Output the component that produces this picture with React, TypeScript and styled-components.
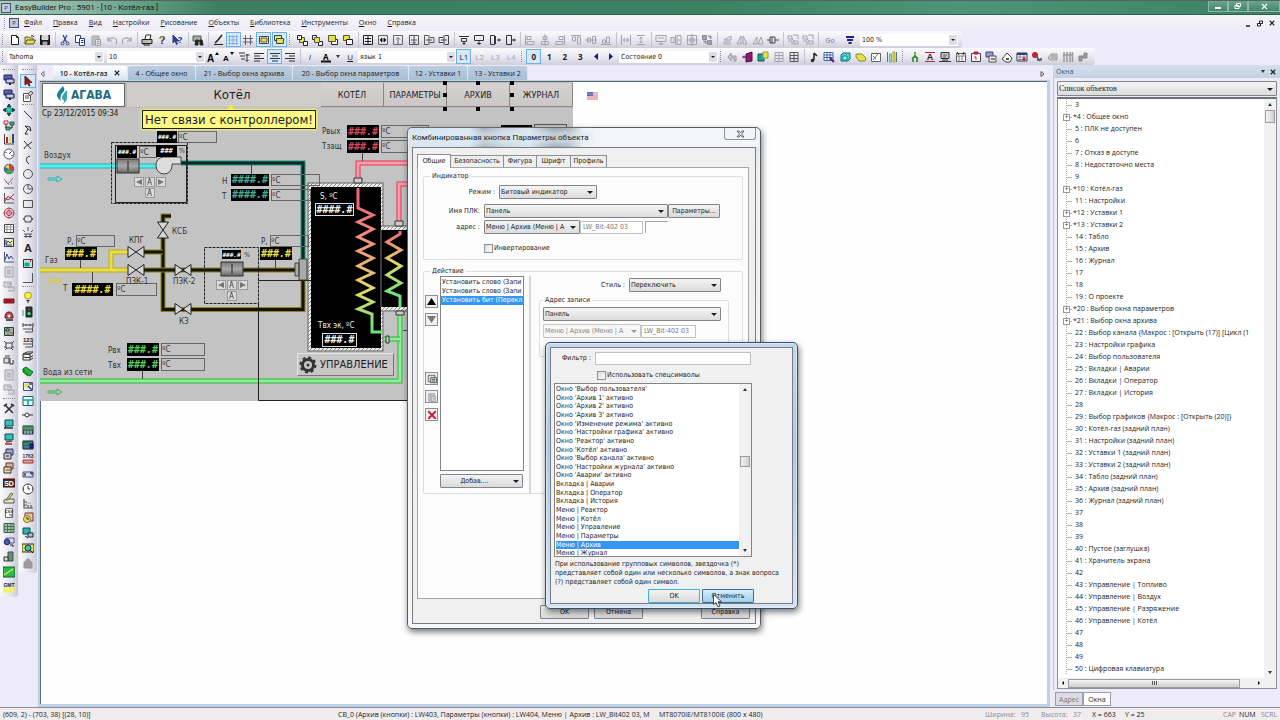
import React, { ReactNode } from 'react';
import styled, { createGlobalStyle, css } from 'styled-components';

const ui = '"Open Sans", "Noto Sans", sans-serif';
const tahoma = '"DejaVu Sans Condensed", "DejaVu Sans", sans-serif';
const caption = 'Roboto, "Open Sans", sans-serif';

const Global = createGlobalStyle`
  *, *::before, *::after { box-sizing: border-box; }
  body { margin: 0; background: #edebf7; font-family: ${ui}; font-size: 7px; color: #1c1c24; }
  button, input, select { font: inherit; color: inherit; margin: 0; padding: 0; border-radius: 0; }
  ul { list-style: none; margin: 0; padding: 0; }
  svg { display: block; }
`;

/* ---------- icons, all on a 12 x 12 grid ---------- */
const K = '#222', G = '#a3a3ab', B = '#2b3f8f', Y = '#e8e23a', T = '#19a39b', R = '#c0203a';
const p = (d: string, s = K, f = 'none', w = 1) => <path d={d} stroke={s} fill={f} strokeWidth={w} />;
const frame = (s = K, f = '#fff') => p('M1.5 2.5h9v8h-9z', s, f);
const letters = (t: string, c = K, size = 6, y = 8) => (
  <text x="6" y={y} textAnchor="middle" fontSize={size} fontWeight="700" fontFamily="Liberation Sans" fill={c}>{t}</text>
);

const icons: Record<string, ReactNode> = {
  file: p('M2.5 1.5h5l2 2v7h-7zM7.5 1.5v2h2', K, '#fff'),
  open: <>{p('M1 10V3h4l1 1h3v2', '#6a6a20', '#d9d36a')}{p('M1 10l2-4h8.500l-2 4z', '#55551a', '#e7e05a')}{p('M7 2q2-1 3 1', K)}</>,
  save: <>{p('M1.500 1.500h9v9h-9z', '#111', '#222')}{p('M3 1.500h6v4H3z', '#ddd', '#cfd8d0')}{p('M4 8h4v2.500H4z', '#999', '#aaa')}</>,
  cut: <>{p('M4 1l3.500 7M8 1L4.500 8', B, 'none', 1.2)}<circle cx="3.500" cy="9.500" r="1.500" fill="none" stroke={B} /><circle cx="8.500" cy="9.500" r="1.500" fill="none" stroke={B} /></>,
  copy: <>{p('M1.500 1.500h5v7h-5z', B, '#fff')}{p('M5.500 4.500h5v7h-5zM7 6.500h2.500M7 8.500h2.500', B, '#fff')}</>,
  clone: <>{p('M1.500 1.500h8v8h-8z', '#555', '#ddd')}{p('M4.500 4.500h7v6h-7zM6 6.500h4M6 8.500h4', '#444', '#d8e8d8')}</>,
  paste: <>{p('M2 2h7v9H2z', G, '#bdbdc4')}{p('M5.500 5.500h5v6h-5zM7 7.500h2.500M7 9.500h2.500', G, '#ddd')}</>,
  undo: p('M2 3v4h4M2 7q2-4 6-3t2 6', G, 'none', 1.2),
  redo: p('M10 3v4H6M10 7Q8 3 4 4t-2 6', G, 'none', 1.2),
  print: <>{p('M4 5l1-4h5l-1 4', K, '#fff')}{p('M1 5.500h10v4H1zM2.500 9.500l.500 1.500h6', K, '#b9b9b9')}{p('M7 7.500h2', Y)}</>,
  help: <>{letters('?', '#333', 11, 10)}<path d="M4.500 3.500Q6 2 7.500 3.500" stroke="#d8d020" fill="none" /></>,
  whats: <>{p('M1 1l0 8 2-2 1.500 3.500 1-.500L4 7h3z', B, B)}<text x="6" y="9" fontSize="9" fontWeight="700" fill={B}>?</text></>,
  find: <>{p('M1 2h8v5H1z', '#556', '#9bb59b')}{p('M4 6h2v5H3zM8 6h2l1 5H8zM6 7h2', K, '#222')}</>,
  brush: <>{p('M2 10.500h9', K)}{p('M3 9l3-3M6 6l4-5', K, 'none', 1.600)}</>,
  grid: p('M1 2.500h10M1 6h10M1 9.500h10M2.500 1v10M6 1v10M9.500 1v10', '#7f9fd0', 'none', 0.800),
  snap: p('M3.500 1v10M8.500 1v10M1 4.500h10M1 8h10', '#333', 'none', 0.700),
  box: <>{p('M1.500 2.500h9v7h-9z', '#444', '#fff')}{p('M3 4h6v4H3z', '#555', Y)}</>,
  boxes: <>{p('M1.500 1.500h7v5h-7z', '#444', '#d8e890')}{p('M3.500 4.500h7v5h-7z', '#444', Y)}</>,
  front: <>{p('M1.500 1.500h4v4h-4zM7.500 7.500h4v4h-4z', K, '#fff')}{p('M3.500 3.500h5v5h-5z', '#555', Y)}</>,
  back: <>{p('M3.500 3.500h5v5h-5z', '#555', Y)}{p('M1.500 1.500h4v4h-4zM7.500 7.500h4v4h-4z', K, '#fff')}</>,
  fwd: <>{p('M4.500 5.500h6v5h-6z', K, '#fff')}{p('M1.500 1.500h7v6h-7z', '#555', Y)}</>,
  bwd: <>{p('M1.500 1.500h6v5h-6z', '#555', Y)}{p('M4.500 5.500h6v5h-6z', K, '#fff')}</>,
  cw: <>{p('M1.500 1.500h9v9h-9zM6 2v8M3 4.500h6M3 7.500h6', K)}</>,
  ch: <>{p('M1.500 1.500h9v9h-9z', '#666')}{p('M3 6l2-2v4zM9 6L7 4v4z', K, K)}</>,
  ct: p('M1.500 1.500h9v9h-9zM6 4v6M4 5.500l2-2 2 2', '#666'),
  cp: p('M1.500 1.500h9v9h-9zM6 2v8M3 6h6M4.500 8L6 9.500 7.500 8', '#555'),
  ml: p('M5 1.500H1.500v9H5M6 1v10M7 3.500h4v5H7M3 6h6', '#555'),
  mr: p('M7 1.500h3.500v9H7M6 1v10M5 3.500H1v5h4M3 6h6', '#444'),
  sw: p('M1 2.500h10M3.500 4.500h5v3h-5zM6 7v4M4.500 9.500h3', '#333'),
  sh: p('M1.500 1.500h9v5h-9zM6 6.500V11M4 9.500h4', '#333'),
  s3: p('M1.500 1.500h4v9h-4zM6.500 2v8M8 6h4M10 4.500v3', '#333'),
  s4: p('M2.500 1.500h5v9h-5zM8 6h4M10 4.500v3', '#333'),
  al: p('M1.500 1v10M3 2.500h4v3H3zM3 7.500h7v3H3z', G),
  ac: p('M6 0v12M4 2.500h4v3H4zM2.500 7.500h7v3h-7z', G),
  ar: p('M10.500 1v10M5 2.500h4v3H5zM2 7.500h7v3H2z', G),
  at: p('M1 1.500h10M2.500 3h3v4h-3zM7.500 3h3v7h-3z', G),
  am: p('M0 6h12M2.500 4h3v4h-3zM7.500 2.500h3v7h-3z', G),
  ab: p('M1 10.500h10M2.500 9V6h3v3zM6.500 9V3h3v6z', G),
  dh: p('M1.500 1v10M10.500 1v10M3 6h6M3 6l2-2M3 6l2 2M9 6L7 4M9 6L7 8', G),
  dv: p('M2 1.500h8M2 10.500h8M6 3v6M4.500 4.500L6 3l1.500 1.500M4.500 7.500L6 9l1.500-1.500', G),
  z1: p('M1 1.500h10v6H1zM3 4h6M6 7v4M3.500 10h5', G),
  z2: p('M1 3.500h3v5H1zM5.500 1v10M7 1.500h4v9H7zM8 6h2', G),
  z3: p('M1.500 1.500h9v9h-9zM4 4h4v4H4zM6 0v12M0 6h12', G),
  z4: p('M1.500 1.500h4v4h-4zM6.500 6.500h4v4h-4zM7 2h3v3M2 7h3v3', '#8d8d95', '#a3a3ab'),
  f1: p('M10 2L3 6h7zM10 8H3v2h7', G),
  f2: p('M5 2v8H1zM7 2v8h4z', G),
  f3: p('M5 3v7H1zM6 10l3-7 2 7z', G),
  f4: p('M0 6h3M3 3v6h5V3zM8 6h4M5 3v6', '#444'),
  g1: p('M1 2h4v3H1zM7 7h4v3H7zM6 1h5v4M1 7h4v4M5 5l2 2', G),
  go: letters('Go', '#99a', 7, 9),
  stack: p('M2 3h8M3 6h6M4.500 9h3', '#1b1f86', 'none', 2),
  alignL: p('M1 2.500h10M1 5h6M1 7.500h10M1 10h6', '#333'),
  alignC: p('M1 2.500h10M3 5h6M1 7.500h10M3 10h6', '#333'),
  alignR: p('M1 2.500h10M5 5h6M1 7.500h10M5 10h6', '#333'),
  space: p('M1 2h6M2 5h5M3 8h4M9 3v7M7.500 9L9 10.500 10.500 9M7.500 4h4', '#333'),
  grow: <><text x="0" y="11" fontSize="10" fontWeight="700" fontFamily="Liberation Sans">A</text><path d="M8 4l2-3 2 3z" /></>,
  shrink: <><text x="1" y="10" fontSize="8" fontWeight="700" fontFamily="Liberation Sans">A</text><path d="M8 1l2 3 2-3z" /></>,
  flash: p('M1 6l3-4v3h5v5H7V7H4v3z', '#9a9aa4', '#c4c4cc'),
  shape: <>{p('M0 6h4M2 4.500v3', '#44208a')}{p('M4 3l6-2v9l-6 1z', '#501040', '#8a1e6a')}</>,
  picture: <>{p('M1 3h6v7H1z', '#155', T)}{p('M6 1h5v6H6z', '#995', Y)}</>,
  shelf: p('M2 1.500h8v9H2zM2 4.500h8M2 7.500h8M5 3h2M5 6h2M5 9h2', '#555'),
  shelfG: p('M2 1.500h8v9H2zM2 4.500h8M2 7.500h8M5 3h2M5 6h2M5 9h2', G),
  note: <>{p('M6 2v7M6 2l3 3', K, 'none', 1.500)}<circle cx="4.500" cy="9.500" r="1.700" fill="#222" /></>,
  tableB: <>{p('M1 1.500h9v8H1zM1 4h9M1 6.500h9M4 1v8M7 1v8', '#46a', '#fff')}{p('M7 7l4 4', '#44208a', 'none', 2)}</>,
  cube: <>{p('M2 4l2-2h7v6l-2 2H2z', '#077', '#55d3d3')}{p('M4 5h4v4H4z', '#088', '#9ff')}</>,
  tag: p('M1 3h6l4 4-1 3H4L1 6z', '#885', Y),
  edit: <>{frame('#667')}{p('M3 9l5-6M3 5l3 3', '#494')}</>,
  bars: <>{p('M1.500 1v10M10.500 1v10', '#577')}{p('M3.500 3h2v8h-2z', '#7aa', '#9dc')}{p('M7 1h2v10H7z', '#aa4', Y)}</>,
  run: <>{p('M6 1v4L3 8M6 5l3 3M4 8v3M8 8v3', '#484', 'none', 1.800)}{p('M4 4l4-2', Y)}</>,
  textA: <>{p('M1 1.500h10M1 10.500h10', R)}{letters('A', K, 9, 9)}</>,
  screen: <>{p('M2 1.500h8v6H2zM0 10.500h12M3 9h6', '#333', '#ccc')}{p('M4 4h4M4 6h3', '#555')}</>,
  cal: <>{frame('#555')}{p('M1 5h10M4 5v5M7 5v5', '#777')}{p('M2 1l2 3M9 1L8 4', '#222')}</>,
  clip: <>{frame('#444')}{p('M4 1h4v2H4z', R, R)}{p('M4 6h2v3', R)}</>,
  win: <>{p('M1 1h7v5H1z', '#448', '#99c')}{p('M4 5h7v6H4z', '#555', '#eee')}{p('M6 8h4', K)}</>,
  house: <>{p('M1 8l5-6 5 5-2 4H5z', '#444', '#fff')}{p('M5 8h3', '#464', 'none', 2)}</>,
  sched: <>{p('M1 2h10v8H1z', '#335', '#fff')}{p('M1 3h10', B, 'none', 2)}{p('M2 6h8M2 8.500h8M4 4v6M8 4v6', '#888')}{p('M7 7h2v2H7z', R, R)}</>,
  hand: <><circle cx="4" cy="4" r="3" fill={R} />{p('M5 5l4 5M6 9h4V7', '#555', 'none', 1.500)}</>,
  gray1: p('M1 7l3-4h6v6H3zM4 5h5M4 7h5', '#999', '#ccc'),
  gray2: p('M2 1v10M5 1v10M8 1v10M10.500 1v10M1 4h10', '#999', 'none', 1.500),
  gray3: p('M2 5h5V2h3v5H5v3H2z', '#888', '#999'),
  arrow: p('M3 1v9l2.500-2 1.500 3 1-.500L6.500 7.500H10z', '#6a1616', '#8a1c1c'),
  props: <>{p('M1.500 3.500h7v8h-7zM3 6h4M3 8h4', '#555', '#fff')}{p('M6 4l3-3 2 2-3 3z', '#555', '#ccc')}</>,
  line: p('M2 2l8 8', '#333'),
  poly: p('M3 2l5 1 1 4-3-2zM6 5l-3 5h3', '#333'),
  bez: p('M2 2l7 8M10 3L3 8M2 10l1-2', '#333'),
  arc: p('M8 2Q3 3 5 8l2 2', '#333'),
  circle: <circle cx="6" cy="6" r="4.500" stroke="#555" fill="none" />,
  pie: <><circle cx="6" cy="6" r="4.500" stroke="#555" fill="none" />{p('M6 1.500V6h4.500', '#555')}</>,
  rect: p('M1.500 2.500h9v7h-9z', '#555'),
  roundp: p('M3 3h6v2l2 1-2 1v2H3V7L1 6l2-1z', '#444'),
  bracket: p('M6 0v4M1 3l2 2M11 3L9 5M2 7h8M2 9.500h8M4 7v4M8 7v4', '#555'),
  bigA: letters('A', K, 11, 10),
  image: <>{frame('#333', '#bfe8d8')}{p('M3 6h4v3H3z', T, T)}{p('M8 4h1', R, 'none', 2)}</>,
  corner: p('M10.500 1v9.500H1', '#555'),
  bulb: <><circle cx="6" cy="4.500" r="3.500" fill="#f4ee4a" stroke="#a49c20" />{p('M4.500 9.500h3M5 11h2', K)}</>,
  light: <>{p('M4 1h6v10H4z', '#133', '#1a3a2a')}<circle cx="7" cy="3.500" r="1.200" fill={R} /><circle cx="7" cy="7.500" r="1.600" fill="#3cf06a" />{p('M1 4v6', T)}</>,
  slide: <>{p('M1 2v4M11 2v4M1 4h10M4 3v2M8 3v2', '#444')}{p('M1 8h9.500M10.500 6v5H3', '#555')}</>,
  num: <>{letters('123', K, 6, 5.500)}{p('M1 8h9.500M10.500 5v6H3', '#555')}</>,
  sheets: p('M1 4l4-2h6L8 4zM1 7l3 .500h4l3-2M1 10h7l3-2M8 4v6M1 4h7M1 4v6', '#333', '#fff'),
  green: p('M1 4l3-2 7 5-3 4-2-1zM1 4v3l5 4', '#0c6a1c', '#22b53c'),
  multi: <>{frame('#557', '#e8f0ff')}{p('M3 4h3v3H3z', Y, Y)}{p('M6 6l4 4M7 4h3', B, 'none', 1.500)}</>,
  split: <>{p('M1 1.500h10v9H1z', '#356', '#dff')}{p('M1 5h10M6 5v5', T, 'none', 1.500)}</>,
  words: <>{p('M1 1h8v5H1z', '#226', '#5566b0')}{p('M3 5h8v4H3z', '#114', '#c4cce8')}{p('M7 9v2', K, 'none', 2)}</>,
  move: <>{p('M6 0l2 3H4zM6 12l2-3H4zM0 6l3-2v4zM12 6L9 4v4z', '#144', '#144')}{p('M4 4h4v4H4z', T, '#43d3c3')}</>,
  flow: <>{p('M1 2h4v3H1z', R, '#fff')}{p('M7 3h4v3H7zM3 8h4v3H3z', '#264', '#4a8')}{p('M3 5v4M9 6v3H7', K)}</>,
  bar3: <>{p('M1.500 1v10H11', '#444')}{p('M4 4v6', R, 'none', 2)}{p('M7 2v8', Y, 'none', 2)}{p('M10 1v9', '#24a', 'none', 2)}</>,
  gauge: <><circle cx="6" cy="6" r="5" stroke="#555" fill="#fff" />{p('M6 6l2.500-2.500M3 4v1M9 7v1', '#333')}</>,
  wheel: <><circle cx="6" cy="6" r="4.800" fill="#3a6ac0" stroke="#333" strokeWidth=".600" />{p('M6 6V1.500A4.500 4.500 0 0 1 10 8z', 'none', '#e03a3a')}{p('M6 6l4 2a4.500 4.500 0 0 1-7.500 1z', 'none', '#38b048')}{p('M6 6L2 4a4.500 4.500 0 0 1 4-2.500z', 'none', '#e8d838')}</>,
  scatter: <>{p('M1 2l5 6M10 1L5 7', '#7a5560', 'none', 0.800)}{p('M1 11h10M3 5h1M8 6h1', '#555')}</>,
  trend: <>{p('M1.500 1v10H11', '#555')}{p('M2 9l3-5 2 2 4-4', R)}{p('M2 6l3 2 3-2 3 2', '#933')}</>,
  target: <><circle cx="6" cy="6" r="4.800" stroke={R} fill="none" /><circle cx="6" cy="6" r="2.500" stroke="#a24" fill="none" />{p('M6 0v12M0 6h12', '#a55', 'none', 0.600)}</>,
  list: <>{frame('#444')}{p('M1 5h10M1 7.500h10M4 2v8M7.500 2v8', '#777', 'none', 0.700)}</>,
  chartY: <>{frame('#335', '#f2f09a')}{p('M3 4v5h6M3 8l2-3 2 2 2-2', B)}</>,
  wave: <>{p('M1.500 1v10H11', '#557')}{p('M2 9l2-6 2 5 2-3 2 3', '#3344a0')}</>,
  docG: p('M2 1h8v10H2zM4 4h4M4 6h4M4 8h4', G, '#d8d8de'),
  docG2: p('M1 2h7v5H1zM5 7h6v4H5M4 4h5', G, '#d8d8de'),
  red: <>{p('M1 4h10v4H1z', '#711', R)}{p('M3 6h6', '#600')}</>,
  alarm: <>{p('M2 8q0-6 4-6t4 6z', '#511', '#d04050')}{p('M3 10h7', K, 'none', 1.500)}<circle cx="6" cy="6" r="1.500" fill="#fff" /></>,
  panel: <>{frame('#243', '#9ab8a0')}{p('M3 4h3v2H3z', K, '#fff')}{p('M7 7l3 2M4 9h2', R)}</>,
  spider: p('M3 4h6v5H3zM1 2l2 2M11 2L9 4M1 8h2M9 8h2M2 11l2-2M10 11L8 9', '#444', '#e8e8f0'),
  touch: <>{p('M1 4h5v5H1zM2 2h5', '#444', '#ddd')}{p('M7 4v6h3V6', K, '#fff')}</>,
  tools: p('M2 2l8 8M10 2L2 10M1 3l3-2M8 1l3 2', '#333', 'none', 1.600),
  mon: <>{p('M2 2h8v6H2z', '#055', '#38c0b8')}{p('M1 10h9M3 8l-1 2', '#333', 'none', 1.500)}</>,
  monR: <>{p('M2 1h8v6H2z', '#055', '#38c0b8')}{p('M3 9l6-1M2 11h7', '#933', 'none', 1.500)}</>,
  disks: <>{p('M3 1h7v6H3z', '#336', '#9aa4cc')}{p('M1 5h7v6H1z', '#333', '#ccc')}{p('M3 8h3', K)}</>,
  disksR: <>{p('M3 1h7v6H3z', '#633', '#d8b0a0')}{p('M1 5h7v6H1z', '#333', '#e4dca0')}{p('M3 8h4', R)}</>,
  sd: <>{p('M0 2h12v8H0z', '#600', '#333')}{letters('SD', '#fff', 7, 8.500)}</>,
  pen: <>{p('M1 8l4-1h6v4H1z', '#555', '#e8e8c0')}{p('M3 8l5-7 2 1-5 6z', '#665', Y)}</>,
  csv: <>{p('M2.500 1.500h7v9h-7z', '#666', '#fff')}{letters('csv', '#333', 5, 6)}{p('M6 8h3v2', '#555')}</>,
  sheet: <>{p('M1 1.500h10v9H1z', '#386048', '#9cc8a0')}{p('M1 4.500h10M1 7.500h10M4.500 1v9M8 1v9', '#386048', 'none', 0.800)}</>,
  camera: <>{p('M3 2h8v5H3z', '#557', '#dde')}<circle cx="4" cy="6" r="2.800" fill="#4a64a8" stroke="#226" />{p('M7 9h3v2', K)}</>,
  phone: <>{p('M5 1h5v9H5z', '#354', '#6a8a7a')}{p('M1 6h4v4H1z', '#333', '#ddd')}</>,
  chartG: <>{p('M0 1h12v10H0z', '#0a6a2a', '#28b850')}{p('M1 9l9-6', Y, 'none', 1.500)}</>,
  gmt: <>{p('M1 7h10v4H1z', '#f0f060', '#f4f070')}{letters('GMT', K, 5, 6)}</>,
  key: <><circle cx="5" cy="6" r="2" fill="#fff" stroke="#333" />{p('M7 6h4M0 6h3', '#333')}</>,
  term: <>{p('M1 2h10v8H1z', '#123', '#4a6a7a')}{p('M1 4h10', '#40a050', 'none', 3)}{p('M3 7v3M6 7v3M9 7v3', '#cde')}</>,
  termB: <>{p('M1 2h10v8H1z', '#123', '#5070a0')}{p('M1 4h6v2H1z', '#173', '#40c050')}{p('M8 5h3v4H8z', '#114', '#2030a0')}</>,
  cnt: <>{letters('1763', '#333', 5, 5)}{p('M1 7h10v3H1z', '#a33', '#d8a0a8')}</>,
  tag2: <>{p('M1 4h10v5H1z', '#446', '#dde')}{p('M3 5v3M8 5h2v2', B, 'none', 1.500)}</>,
  clock: <><circle cx="6" cy="6" r="5" stroke="#444" fill="#fff" />{p('M6 6V3M6 6h2M6 1v1M6 10v1M1 6h1M10 6h1', '#333')}</>,
  ruler: <>{p('M2 1v9h9M2 4h3M2 7h3M6 7v3M9 7v3', '#555', 'none', 1.200)}{p('M4 5h5', '#aa8')}</>,
  timer: <>{p('M3 1h8v8H3z', '#733', '#e8c8a0')}<circle cx="5" cy="7" r="3.500" fill="#f0e040" stroke="#775" />{p('M5 7V5M5 7h2', K)}</>,
  net: <>{p('M1 1h7v6H1z', '#055', '#30b0a8')}{p('M6 6h5v4H6zM3 9l3 2', '#223', '#a8c8d8')}</>,
  look: <>{p('M0 2h12v8H0z', '#333', '#e0e050')}<circle cx="6" cy="6" r="3" fill="#40c0c0" stroke="#135" />{p('M8 8l3 3', K)}</>,
  grayBag: p('M2 5h1l2-3h2l2 3h1v6H2z', '#999', '#9a9aa0'),
};

const Svg = styled.svg<{ $s: number }>`
  width: ${(q) => q.$s}px;
  height: ${(q) => q.$s}px;
  flex: none;
`;
const Icon = ({ n, s = 12 }: { n: string; s?: number }) => (
  <Svg $s={s} viewBox="0 0 12 12" aria-hidden="true">{icons[n]}</Svg>
);

/* ---------- frame of the application ---------- */
const App_ = styled.div`
  height: 100vh;
  display: flex;
  flex-direction: column;
  overflow: hidden;
  background: #edebf7;
`;
const TitleBar = styled.header`
  height: 15px;
  flex: none;
  display: flex;
  align-items: center;
  gap: 4px;
  padding-left: 1px;
  border-top: 1px solid #56645e;
  border-bottom: 1px solid #2b5f4c;
  background: linear-gradient(90deg, #a9cbbd 0, #84b39f 90px, #59967c 160px, #3c7f63 220px, #3b8263 55%, #4f9478 75%, #3d8164 100%);
`;
const AppTitle = styled.h1`
  margin: 0;
  flex: 1;
  font: 400 8px/12px ${caption};
  color: #10201a;
`;
const AppMark = styled.span`
  width: 10px;
  height: 10px;
  border: 1px solid #44507c;
  background: #c3c9dc;
  color: #333c68;
  font-size: 6px;
  line-height: 8px;
  text-align: center;
`;
const SysButtons = styled.div`
  display: flex;
  align-self: flex-start;
`;
const SysButton = styled.button<{ $wide?: boolean }>`
  width: ${(q) => (q.$wide ? 32 : 20)}px;
  height: 11px;
  border: 1px solid #8fb8a6;
  border-top: 0;
  background: linear-gradient(#6aa68d, #45866b);
  color: #fff;
  display: grid;
  place-items: center;
`;
const MenuBar = styled.nav`
  height: 16px;
  flex: none;
  display: flex;
  align-items: center;
  padding: 0 4px 0 2px;
  background: linear-gradient(#f6f5fb, #ecebf7);
`;
const MenuItem = styled.button`
  border: 0;
  background: none;
  padding: 0 6px 0 5px;
  font-size: 7px;
  line-height: 12px;
  &::first-letter { text-decoration: underline; }
`;
const MdiButtons = styled.div`
  margin-left: auto;
  display: flex;
  gap: 4px;
`;
const PlainButton = styled.button`
  width: 8px;
  height: 10px;
  border: 0;
  background: none;
  display: grid;
  place-items: center;
`;
const Grip = styled.i<{ $row?: boolean }>`
  flex: none;
  ${(q) => q.$row
    ? css`height: 3px; width: 12px; margin: 1px auto; border-top: 1px dotted #8b8ba0;`
    : css`width: 3px; height: 11px; margin: 0 2px 0 2px; border-left: 1px dotted #8b8ba0;`}
`;
const ToolRow = styled.div<{ $end: number }>`
  height: 17px;
  flex: none;
  display: flex;
  align-items: center;
  align-self: flex-start;
  width: ${(q) => q.$end}px;
  background: linear-gradient(#fbfbfd, #e6e5ee 60%, #cfcdda);
  border-radius: 0 3px 3px 0;
`;
const ToolGroup = styled.div<{ $w: number; $sep?: boolean }>`
  width: ${(q) => q.$w}px;
  flex: none;
  display: flex;
  justify-content: space-around;
  align-items: center;
  ${(q) => q.$sep && css`box-sizing: content-box; border-left: 1px solid #c4c3d2; margin-left: 2px; padding-left: 1px;`}
`;
const ToolButton = styled.button<{ $on?: boolean; $dim?: boolean; $bold?: boolean }>`
  width: 15px;
  height: 15px;
  display: grid;
  place-items: center;
  border: 1px solid ${(q) => (q.$on ? '#6fb0e0' : 'transparent')};
  background: ${(q) => (q.$on ? '#d3e8f8' : 'none')};
  color: ${(q) => (q.$dim ? '#a3a3ad' : '#1c1c24')};
  font: 8px/12px ${ui};
  font-weight: ${(q) => (q.$bold ? 700 : 400)};
`;
const ArrowWrap = styled.span<{ $w?: number }>`
  position: relative;
  display: block;
  flex: ${(q) => (q.$w ? 'none' : '1')};
  width: ${(q) => (q.$w ? q.$w + 'px' : 'auto')};
  &::after {
    content: '';
    position: absolute;
    right: 4px;
    top: calc(50% - 1px);
    border: 3px solid transparent;
    border-top-color: currentColor;
    border-bottom: 0;
    pointer-events: none;
  }
`;
const BarArrow = styled(ArrowWrap)`
  &::before {
    content: '';
    position: absolute;
    right: 1px;
    top: 1px;
    width: 8px;
    height: 10px;
    background: #dddce6;
  }
  &::after { right: 3px; border-width: 2px 2px 0; }
`;
const BarSelect = styled.select`
  appearance: none;
  display: block;
  width: 100%;
  height: 12px;
  border: 0;
  padding: 0 12px 0 2px;
  background: #fff;
  font: 7px/12px ${tahoma};
`;
const BarCombo = ({ label, text, w }: { label: string; text: string; w: number }) => (
  <BarArrow $w={w}>
    <BarSelect aria-label={label} defaultValue={text}><option>{text}</option></BarSelect>
  </BarArrow>
);

const ToolIcons = ({ names, w, on = [], sep }: { names: string; w: number; on?: number[]; sep?: boolean }) => (
  <ToolGroup $w={w} $sep={sep}>
    {names.split(' ').map((n, i) => (
      <ToolButton key={i} aria-label={n} $on={on.includes(i)}><Icon n={n} /></ToolButton>
    ))}
  </ToolGroup>
);

const Main = styled.main`
  flex: 1;
  min-height: 0;
  display: flex;
`;
const Palette = styled.div<{ $w: number }>`
  width: ${(q) => q.$w}px;
  flex: none;
  align-self: flex-start;
  margin-right: 1px;
  padding: 3px 0;
  display: flex;
  flex-direction: column;
  background: linear-gradient(90deg, #fbfbfd, #e3e2ec 60%, #c9c8d6);
  border-radius: 0 0 3px 3px;
`;
const PaletteGroup = styled.div<{ $h: number }>`
  height: ${(q) => q.$h}px;
  display: flex;
  flex-direction: column;
  align-items: center;
  justify-content: space-around;
`;
const PaletteButton = styled(ToolButton)`
  width: 16px;
  height: 14px;
`;
const PaletteIcons = ({ names, h, on = -1 }: { names: string; h: number; on?: number }) => (
  <PaletteGroup $h={h}>
    {names.split(' ').map((n, i) => (
      <PaletteButton key={i} aria-label={n} $on={on === i}><Icon n={n} /></PaletteButton>
    ))}
  </PaletteGroup>
);

const Work = styled.section`
  flex: 1;
  min-width: 0;
  display: flex;
  flex-direction: column;
`;
const TabStrip = styled.div`
  height: 15px;
  flex: none;
  display: flex;
  align-items: flex-end;
  padding-left: 0;
`;
const TabArrow = styled.button<{ $end?: boolean }>`
  border: 0;
  background: none;
  width: 8px;
  height: 13px;
  margin: ${(q) => (q.$end ? '0 4px 0 auto' : '0 7px 0 0')};
  display: grid;
  place-items: center;
`;
const DocTab = styled.button<{ $w: number; $on?: boolean }>`
  width: ${(q) => q.$w}px;
  height: 14px;
  flex: none;
  border: 0;
  border-right: 1px solid #dce6f2;
  border-radius: 2px 3px 0 0;
  background: ${(q) => (q.$on ? 'linear-gradient(#ffffff, #d5e5f5)' : 'linear-gradient(#bccde0, #a9bfd6)')};
  font: 7px/13px ${ui};
  font-weight: ${(q) => (q.$on ? 600 : 400)};
  white-space: nowrap;
  display: flex;
  align-items: center;
  justify-content: space-evenly;
`;
const CanvasFrame = styled.div`
  flex: 1;
  min-height: 0;
  border: solid #bcd2ea;
  border-width: 1px 3px 3px 2px;
  background: #fdfefd;
  box-shadow: inset 1px 1px 0 #5b6b66;
`;
const Canvas = styled.div`
  position: relative;
  margin: 1px 0 0;
  height: 100%;
`;

/* ---------- boiler screen ---------- */
const Screen = styled.div`
  position: relative;
  width: 533px;
  background: #c3c3c3;
  font-family: ${tahoma};
`;
const ScreenHead = styled.div`
  display: flex;
  height: 26px;
  padding: 1px 0 1px 2px;
  background: #bdb9b9;
`;
const Logo = styled.div`
  width: 83px;
  background: #fff;
  border: 1px solid #666;
  display: flex;
  align-items: center;
  justify-content: center;
  gap: 3px;
  color: #1b6f80;
  font: 700 12px/20px "DejaVu Sans Condensed", sans-serif;
`;
const ScreenTitle = styled.h2`
  margin: 0 0 0 2px;
  flex: 1;
  background: #cfcbcb;
  text-align: center;
  padding-left: 16px;
  font-size: 13px;
  font-weight: 400;
  line-height: 24px;
`;
const NavButton = styled.button`
  width: 63px;
  border: 1px solid #8a8686;
  border-width: 0 1px 1px 0;
  background: linear-gradient(#d6d2d2, #cbc7c7);
  font-size: 9px;
`;
const Handle = styled.i<{ $x: number; $y: number }>`
  position: absolute;
  left: ${(q) => q.$x}px;
  top: ${(q) => q.$y}px;
  width: 4px;
  height: 4px;
  background: #000;
`;
const Warning = styled.p`
  position: absolute;
  left: 102px;
  top: 28px;
  width: 174px;
  margin: 0;
  border: 1px solid #222;
  background: #fbfb86;
  box-shadow: 0 0 2px 1px #f4f46a;
  text-align: center;
  font-size: 13px;
  line-height: 17px;
  white-space: nowrap;
`;
const ControlButton = styled.button`
  position: absolute;
  left: 257px;
  top: 271px;
  width: 97px;
  height: 23px;
  border: 1px solid #777;
  border-color: #e6e6e6 #777 #777 #e6e6e6;
  background: #c9c6c6;
  display: flex;
  align-items: center;
  gap: 3px;
  padding-left: 1px;
  font-size: 11px;
`;
const Flag = styled.svg`
  position: absolute;
  left: 547px;
  top: 10px;
`;
const Lamp = styled.svg`
  position: absolute;
  left: 187px;
  top: 22px;
  width: 8px;
  height: 6px;
`;
const Clock = styled.time`
  position: absolute;
  left: 2px;
  top: 27px;
  font-size: 8px;
  line-height: 10px;
  white-space: nowrap;
`;

const Lbl = ({ x, y, t, c = '#333', s = 8 }: { x: number; y: number; t: string; c?: string; s?: number }) => (
  <text x={x} y={y} fontSize={s} fill={c}>{t}</text>
);
const Field = ({ x, y, w, h = 12, t = '###.#', c, s = 10, line }: { x: number; y: number; w: number; h?: number; t?: string; c: string; s?: number; line?: boolean }) => (
  <g>
    <rect x={x + 0.5} y={y + 0.5} width={w - 1} height={h - 1} fill="#000" stroke={line ? '#ddd' : '#000'} />
    <text x={x + w / 2} y={y + h / 2 + s / 3} textAnchor="middle" fontSize={s} fontWeight="700" fontStyle="italic" fontFamily="DejaVu Sans Mono, monospace" fill={c}>{t}</text>
  </g>
);
const Unit = ({ x, y, w, h = 12, t = 'ºC' }: { x: number; y: number; w: number; h?: number; t?: string }) => (
  <g>
    <rect x={x + 0.5} y={y + 0.5} width={w - 1} height={h - 1} fill="none" stroke="#666" strokeWidth="1" />
    <text x={x + 1} y={y + 9} fontSize="8" fill="#333">{t}</text>
  </g>
);
const Pipe = ({ d, a, b, w = 5 }: { d: string; a: string; b: string; w?: number }) => (
  <g fill="none">
    <path d={d} stroke={a} strokeWidth={w} />
    <path d={d} stroke={b} strokeWidth={w > 4 ? 3 : 1} />
  </g>
);
const Valve = ({ x, y, v }: { x: number; y: number; v?: boolean }) => (
  <g transform={`translate(${x} ${y})${v ? ' rotate(90)' : ''}`}>
    <path d="M-8-5.500L0 0-8 5.500zM8-5.500L0 0 8 5.500z" fill="#d5d5d5" stroke="#222" />
  </g>
);
const Damper = ({ x, y }: { x: number; y: number }) => (
  <g>
    <rect x={x} y={y} width="22" height="14" fill="url(#steel)" stroke="#333" />
    <path d={`M${x + 11} ${y + 2}v10`} stroke="#222" />
  </g>
);
const Pad = ({ x, y }: { x: number; y: number }) => (
  <g>
    {[[0, 0], [11, 0], [22, 0], [11, 11]].map(([dx, dy], i) => (
      <rect key={i} x={x + dx + 0.5} y={y + dy + 0.5} width="9" height="9" fill="#dcdcdc" stroke="#999" />
    ))}
    <path d={`M${x + 2} ${y + 5}l6-3v6zM${x + 30} ${y + 5}l-6-3v6z`} fill="#777" />
    <Lbl x={x + 13} y={y + 8} t="A" /><Lbl x={x + 13} y={y + 19} t="A" />
  </g>
);
const FlowArrow = ({ y, c }: { y: number; c: string }) => (
  <path d={`M48 ${y - 1}h9v-2l5 3-5 3v-2h-9z`} fill="none" stroke={c} />
);

const teal = '#48a894', yel = '#e8de48', olive = '#8f8420', red = '#d04860', green = '#58c860', white = '#f0f0f0';

const Scheme = () => (
  <svg width="533" height="293" viewBox="40 108 533 293" fontFamily="DejaVu Sans Condensed, DejaVu Sans, sans-serif">
    <defs>
      <linearGradient id="steel" x1="0" y1="0" x2="0" y2="1"><stop offset="0" stopColor="#777" /><stop offset=".5" stopColor="#aaa" /><stop offset="1" stopColor="#666" /></linearGradient>
      <linearGradient id="heat" gradientUnits="userSpaceOnUse" x1="0" y1="200" x2="0" y2="330"><stop offset="0" stopColor="#f0657a" /><stop offset=".45" stopColor="#f0a878" /><stop offset=".7" stopColor="#e2da6a" /><stop offset="1" stopColor="#6ee07c" /></linearGradient>
      <linearGradient id="heat2" gradientUnits="userSpaceOnUse" x1="0" y1="230" x2="0" y2="296"><stop offset="0" stopColor="#f0657a" /><stop offset=".5" stopColor="#e2da6a" /><stop offset="1" stopColor="#6ee07c" /></linearGradient>
      <pattern id="hatch" width="4" height="4" patternUnits="userSpaceOnUse"><rect width="4" height="4" fill="#eee" /><path d="M0 4L4 0" stroke="#888" /></pattern>
    </defs>

    <Pipe d="M40 166h77M139 166h18" a="#1cb8b8" b="#5aecec" />
    <Pipe d="M181 163h122v98" a="#2f8f7e" b="#052c28" />
    <Pipe d="M163 238v71.500h140V278" a={olive} b="#15130a" />
    <Pipe d="M144 252h19M144 270h152" a={olive} b="#15130a" />
    <Pipe d="M163 223v-7h8" a={olive} b="#15130a" />
    <Pipe d="M40 270h89M111 270v-18h18" a="#b9ae1e" b={yel} />
    <Pipe d="M40 381h360v-70" a="#36b046" b="#8af092" />

    <rect x="308" y="183" width="75" height="168" fill="url(#hatch)" stroke="#666" />
    <rect x="380" y="226" width="40" height="85" fill="url(#hatch)" stroke="#666" />
    <path d="M311 187h70v43h40v77h-40v41h-70z" fill="#000" />
    <path d="M381 230v77" stroke="#777" />
    <Pipe d="M358 182v-19h60" a="#d83a56" b="#ff9aaa" />
    <Pipe d="M399 223v-39h20" a="#d83a56" b="#ff9aaa" />
    <Pipe d="M384 339h16" a="#36b046" b="#8af092" />
    <path d="M358 188v20l15 7-15 7 15 7-15 8 15 7-15 7 15 7-15 8 15 7-15 7 15 8-15 7 15 7-15 7 14 5v18h11" fill="none" stroke="url(#heat)" strokeWidth="3" />
    <path d="M400 231v3l-13 8 14 8-14 8 14 8-14 9 14 8-14 8 13 5v12" fill="none" stroke="url(#heat2)" strokeWidth="3" />
    <path d="M354 178h8v5h-8zM395 221h8v5h-8zM396 311h8v4h-8zM386 336h3v7h-3z" fill="#ccc" stroke="#333" />
    <path d="M299 259h8v21h-8zM295 263h4v13h-4z" fill="#aaa" stroke="#444" />

    <g fill="none" stroke="#222">
      <rect x="111.500" y="142.500" width="76" height="61" strokeDasharray="3 1" />
      <rect x="115.500" y="145.500" width="71" height="57" />
      <rect x="204.500" y="247.500" width="54" height="56" strokeDasharray="3 1" />
      <path d="M258.500 304v96.500H420M258.500 280.500H311" />
      <path d="M80.500 260v8M92.500 272v11M142.500 371v8M251.500 165v9M275.500 260v8M362.500 152v9M403 330.500h8" stroke="#444" />
    </g>

    <Damper x={117} y={159} />
    <path d="M156 166a8 8 0 1 0 16 0v-2h9v-7h-18a8 8 0 0 0-7 9z" fill="#ddd" stroke="#444" />
    <Pad x={134} y={177} />
    <Damper x={221} y={262} />
    <Pad x={216} y={280} />
    <Valve x={136} y={252} /><Valve x={136} y={270} /><Valve x={183} y={270} /><Valve x={183} y={309} /><Valve x={163} y={230} v />

    <Field x={157} y={131} w={20} t="###.#" c={white} s={6} /><Unit x={178} y={131} w={39} />
    <Field x={117} y={146} w={20} c={white} s={6} /><Unit x={139} y={146} w={18} />
    <Field x={156} y={145} w={21} t="###" c={white} s={7} /><Lbl x={179} y={153} t="%" s={7} />
    <Field x={222} y={250} w={19} h={9} c={white} s={6} /><Lbl x={244} y={257} t="%" s={7} />

    <Lbl x={44} y={158} t="Воздух" /><FlowArrow y={179} c="#18bcbc" />
    <Lbl x={45} y={263} t="Газ" /><FlowArrow y={281} c="#d8ce20" />
    <Lbl x={43} y={375} t="Вода из сети" /><FlowArrow y={392} c="#38b048" />

    <Lbl x={67} y={244} t="P," /><Unit x={76} y={235} w={39} /><Field x={65} y={247} w={32} h={13} c={yel} />
    <Lbl x={63} y={291} t="T" /><Field x={72} y={283} w={41} h={13} t="####.#" c={yel} /><Unit x={116} y={283} w={41} h={13} />
    <Lbl x={129} y={243} t="КПГ" /><Lbl x={126} y={284} t="ПЗК-1" /><Lbl x={173} y={284} t="ПЗК-2" />
    <Lbl x={172} y={234} t="КСБ" /><Lbl x={179} y={324} t="КЗ" />
    <Lbl x={261} y={244} t="P," /><Unit x={270} y={235} w={39} /><Field x={260} y={247} w={32} h={13} c={yel} />
    <Lbl x={222} y={184} t="Н" /><Field x={231} y={174} w={38} t="####.#" c={teal} /><Unit x={271} y={174} w={49} />
    <Lbl x={222} y={199} t="T" /><Field x={231} y={189} w={38} t="####.#" c={teal} /><Unit x={271} y={189} w={40} />
    <Lbl x={322} y={134} t="Pвых" /><Field x={347} y={125} w={32} h={13} c={red} /><Unit x={381} y={125} w={48} h={13} />
    <Lbl x={322} y={149} t="Tзащ" /><Field x={347} y={140} w={32} h={13} c={red} /><Unit x={381} y={140} w={48} h={13} />
    <rect x="501" y="125" width="31" height="13" /><rect x="534.500" y="124.500" width="32" height="12" fill="none" stroke="#555" />
    <Lbl x={108} y={353} t="Pвх" /><Field x={127} y={343} w={32} h={13} c={green} /><Unit x={161} y={343} w={44} h={13} />
    <Lbl x={108} y={368} t="Tвх" /><Field x={127} y={358} w={32} h={13} c={green} /><Unit x={161} y={358} w={44} h={13} />
    <Lbl x={320} y={199} t="S, ºC" c={white} /><Field x={315} y={203} w={39} h={13} t="####.#" c={white} line />
    <Lbl x={318} y={328} t="Твх эк, ºC" c={white} /><Field x={322} y={333} w={35} h={14} c={white} line />
  </svg>
);

/* ---------- dialogs ---------- */
const Dialog = styled.section<{ $x: number; $y: number; $w: number; $h: number; $blue?: boolean }>`
  position: absolute;
  left: ${(q) => q.$x}px;
  top: ${(q) => q.$y}px;
  width: ${(q) => q.$w}px;
  height: ${(q) => q.$h}px;
  display: flex;
  flex-direction: column;
  padding: 0 4px 4px;
  border: 1px solid ${(q) => (q.$blue ? '#33506e' : '#555b60')};
  border-radius: 5px;
  background: ${(q) => (q.$blue ? 'linear-gradient(#c3d8ee, #a9cbe8 40%, #d5e4f3)' : 'linear-gradient(#d9dee2, #eceeef 40px, #f6f7f8)')};
  box-shadow: 0 0 0 1px #f8fafc80 inset, 1px 3px 6px #0008;
  font: 7px/9px ${tahoma};
`;
const DialogTitle = styled.div`
  height: 19px;
  flex: none;
  display: flex;
  justify-content: space-between;
  align-items: center;
  margin: 0 -3px;
  padding: 0 3px;
  border-radius: 4px 4px 0 0;
  background: linear-gradient(90deg, #d4e2ee 0, #dbe9f4 60px, #9aa4aa 75px, #c9d2d8 95px, #dbe6ee 120px, #8d979c 145px, #a5aeb3 160px, #f4f5f6 175px);
`;
const DialogName = styled.h3`
  margin: 0;
  font: 400 8px/10px ${caption};
  background: #dcebf6a0;
  box-shadow: 0 0 5px 3px #dcebf6a0;
`;
const CloseButton = styled.button`
  align-self: flex-start;
  width: 32px;
  height: 12px;
  border: 1px solid #8d9499;
  border-top: 0;
  border-radius: 0 0 3px 3px;
  background: #f3f4f5;
  display: grid;
  place-items: center;
`;
const Client = styled.div`
  flex: 1;
  min-height: 0;
  border: 1px solid #777d82;
  background: #f0f0f0;
  padding: 5px 4px 4px;
  display: flex;
  flex-direction: column;
`;
const DlgTabs = styled.div`
  display: flex;
  align-items: flex-end;
  height: 14px;
`;
const DlgTab = styled.button<{ $w: number; $on?: boolean }>`
  width: ${(q) => q.$w}px;
  height: ${(q) => (q.$on ? 14 : 12)}px;
  border: 1px solid #8c8f94;
  border-left-width: ${(q) => (q.$on ? 1 : 0)}px;
  border-bottom: 0;
  background: ${(q) => (q.$on ? '#fcfcfc' : '#eeeeee')};
  margin-bottom: ${(q) => (q.$on ? -1 : 0)}px;
  z-index: 1;
`;
const Page = styled.div`
  flex: 1;
  margin-right: 2px;
  border: 1px solid #a4a7aa;
  background: #fcfcfc;
  padding: 3px 5px 0;
`;
const Group = styled.fieldset<{ $bottom?: number }>`
  margin: 0 0 6px;
  padding: 0 6px ${(q) => q.$bottom ?? 0}px;
  min-width: 0;
  border: 1px solid #dcdfe2;
  border-radius: 2px;
`;
const Legend = styled.legend`
  padding: 0 2px;
  line-height: 10px;
`;
const Row = styled.div<{ $top?: number; $pad?: number }>`
  display: flex;
  align-items: center;
  height: 14px;
  margin-top: ${(q) => q.$top ?? 0}px;
  padding-left: ${(q) => q.$pad ?? 0}px;
`;
const RowLabel = styled.label<{ $w: number }>`
  width: ${(q) => q.$w}px;
  flex: none;
  padding-right: 4px;
  text-align: right;
  white-space: nowrap;
`;
const FormSelect = styled.select`
  appearance: none;
  display: block;
  width: 100%;
  height: 14px;
  padding: 0 11px 0 1px;
  border: 1px solid #80858a;
  border-radius: 1px;
  background: linear-gradient(#f4f4f4, #dcdcdc);
  &:disabled { background: #f6f6f6; border-color: #c4c6c8; color: #8a8a8a; opacity: 1; }
`;
const ChoiceSlot = styled(ArrowWrap)<{ $off?: boolean }>`
  &::after { ${(q) => q.$off && css`border-top-color: #999;`} }
`;
const Choice = ({ id, text, w, off }: { id: string; text: string; w: number; off?: boolean }) => (
  <ChoiceSlot $w={w} $off={off}>
    <FormSelect id={id} aria-label={text} disabled={off} defaultValue={text}><option>{text}</option></FormSelect>
  </ChoiceSlot>
);
const TextBox = styled.input<{ $w: number }>`
  width: ${(q) => q.$w}px;
  height: 13px;
  flex: none;
  border: 1px solid #c0c3c6;
  background: #fff;
  padding: 0 2px;
  color: #777;
`;
const Stub = styled.i<{ $w: number }>`
  width: ${(q) => q.$w}px;
  height: 12px;
  margin-left: 2px;
  border: 1px solid #a4a4a4;
  border-right: 0;
  border-bottom: 0;
`;
const Tick = styled.input`
  appearance: none;
  width: 9px;
  height: 9px;
  border: 1px solid #8c9298;
  background: linear-gradient(135deg, #ddd, #fafafa);
`;
const TickLabel = styled.label`
  display: flex;
  align-items: center;
  gap: 1px;
`;
const PushButton = styled.button<{ $w: number; $look?: 'default' | 'hot' }>`
  width: ${(q) => q.$w}px;
  height: 14px;
  flex: none;
  border: 1px solid ${(q) => (q.$look === 'default' ? '#35b4d6' : q.$look === 'hot' ? '#3c6f94' : '#80858a')};
  border-radius: 1px;
  background: ${(q) => (q.$look === 'hot' ? 'linear-gradient(#d9edf8, #9fcfea)' : 'linear-gradient(#f3f3f3, #dadada)')};
  line-height: 10px;
`;
const AddButton = styled(PushButton)`
  padding-right: 14px;
`;
const ActionArea = styled.div`
  display: flex;
  height: 217px;
`;
const SideButtons = styled.div`
  width: 15px;
  margin: 19px 0 0 -5px;
  flex: none;
  display: flex;
  flex-direction: column;
  gap: 5px;
`;
const SideButton = styled.button<{ $gap?: boolean }>`
  width: 13px;
  height: 13px;
  margin-top: ${(q) => (q.$gap ? 41 : 0)}px;
  border: 1px solid #8b8f94;
  background: #f0f0f0;
  display: grid;
  place-items: center;
`;
const ActionList = styled.div`
  width: 84px;
  flex: none;
  display: flex;
  flex-direction: column;
  gap: 3px;
`;
const ListBox = styled.ul`
  border: 1px solid #80858a;
  background: #fff;
  overflow: hidden;
`;
const Actions = styled(ListBox)`
  height: 195px;
  padding-top: 1px;
`;
const Option = styled.li<{ $on?: boolean }>`
  padding-left: 1px;
  line-height: 9px;
  white-space: nowrap;
  overflow: hidden;
  background: ${(q) => (q.$on ? '#3397f2' : 'none')};
  color: ${(q) => (q.$on ? '#fff' : 'inherit')};
`;
const ActionForm = styled.div`
  flex: 1;
  min-width: 0;
  margin-left: 5px;
  border-left: 2px solid #d4d6d8;
  padding-left: 8px;
`;
const WriteGroup = styled(Group)`
  margin: 3px 7px 0 0;
  padding: 0 3px;
  height: 62px;
`;
const Footer = styled.div`
  display: flex;
  gap: 5px;
  height: 20px;
  align-items: flex-end;
  padding: 0 1px 0 123px;
`;
const LastButton = styled(PushButton)`
  margin-left: auto;
`;
const FilterClient = styled(Client)`
  margin-top: 4px;
  padding: 3px 0 0 3px;
`;
const Names = styled.div`
  display: flex;
  flex: none;
  width: 198px;
  height: 174px;
  margin-top: 1px;
  border: 1px solid #80858a;
  background: #fff;
  overflow: hidden;
`;
const NameList = styled.ul`
  flex: 1;
  height: 174px;
  display: grid;
  grid-auto-rows: 1fr;
  padding: 1px 0 0 1px;
`;
const NameItem = styled(Option)`
  padding-left: 0;
`;
const Scroll = styled.div`
  width: 12px;
  flex: none;
  background: #f1f1f1;
  display: flex;
  flex-direction: column;
  align-items: center;
  padding: 4px 0;
`;
const Thumb = styled.i<{ $top: number; $h: number }>`
  width: 10px;
  height: ${(q) => q.$h}px;
  margin-top: ${(q) => q.$top}px;
  border: 1px solid #9a9ea2;
  background: linear-gradient(90deg, #f4f4f4, #cfcfcf);
`;
const Tri = styled.i<{ $up?: boolean; $end?: boolean }>`
  border: 2px solid transparent;
  ${(q) => (q.$up ? css`border-top: 0; border-bottom: 3px solid #333;` : css`border-bottom: 0; border-top: 3px solid #333;`)}
  ${(q) => q.$end && css`margin-top: auto;`}
`;
const Hint = styled.p`
  margin: 3px 0 0 1px;
`;
const DialogButtons = styled.div`
  display: flex;
  gap: 2px;
  margin: 2px 0 0 94px;
`;
const Pointer = styled.svg`
  position: absolute;
  left: 673px;
  top: 512px;
`;

/* ---------- windows panel ---------- */
const Side = styled.aside`
  width: 227px;
  flex: none;
  display: flex;
  flex-direction: column;
  margin-left: 3px;
`;
const SideTitle = styled.div`
  height: 13px;
  flex: none;
  display: flex;
  align-items: center;
  gap: 2px;
  padding: 0 3px;
  background: linear-gradient(#d3dfec, #c3d2e2);
  color: #44566c;
`;
const SideName = styled.h2`
  margin: 0;
  flex: 1;
  font: 7px/12px ${ui};
`;
const SideBody = styled.div`
  flex: 1;
  min-height: 0;
  display: flex;
  flex-direction: column;
  padding: 3px 3px 1px 3px;
  border-left: 1px solid #b8c4d4;
`;
const ObjectSelect = styled(FormSelect)`
  height: 15px;
  font: 8px/12px "Liberation Serif", serif;
`;
const SelectSlot = styled.div`
  display: flex;
  flex: none;
  margin-bottom: 1px;
`;
const Tree = styled.div`
  flex: 1;
  min-height: 0;
  display: flex;
  overflow: hidden;
  border: 1px solid #8d9298;
  border-top: 2px solid #6d7276;
  border-bottom: 0;
  background: #fff;
`;
const TreeList = styled.ul`
  flex: 1;
  min-width: 0;
`;
const TreeItem = styled.li<{ $box?: boolean }>`
  position: relative;
  height: 12px;
  padding-left: ${(q) => (q.$box ? 15 : 17)}px;
  overflow: hidden;
  white-space: nowrap;
  font: 7px/12px ${ui};
  background:
    linear-gradient(#b4b4b4, #b4b4b4) 8px 6px / 6px 1px no-repeat,
    linear-gradient(#aaa 50%, transparent 0) 8px 0 / 1px 2px repeat-y;
  ${(q) => q.$box && css`
    &::before {
      content: '+';
      position: absolute;
      left: 5px;
      top: 3px;
      width: 7px;
      height: 7px;
      border: 1px solid #999;
      background: #fff;
      font: 6px/5px ${ui};
      text-align: center;
    }
  `}
`;
const HScroll = styled.div`
  height: 11px;
  flex: none;
  display: flex;
  align-items: center;
  padding: 0 14px 0 3px;
  gap: 3px;
  background: #f1f1f1;
  border: 1px solid #8d9298;
  border-top: 0;
`;
const HThumb = styled.i`
  flex: 1;
  max-width: 172px;
  height: 9px;
  border: 1px solid #9a9ea2;
  background: linear-gradient(#f4f4f4, #cfcfcf);
  display: grid;
  place-items: center;
`;
const SideTabs = styled.div`
  display: flex;
  flex: none;
  height: 17px;
  padding: 2px 0 0 2px;
`;
const SideTab = styled.button<{ $on?: boolean }>`
  width: 28px;
  height: 14px;
  border: 1px solid #9a9eae;
  background: ${(q) => (q.$on ? '#fff' : '#dddce6')};
  color: ${(q) => (q.$on ? '#222' : '#777')};
  font-size: 7px;
`;
const StatusBar = styled.footer`
  height: 13px;
  flex: none;
  display: flex;
  align-items: center;
  padding: 0 1px 0 3px;
  border-top: 1px solid #8b8b93;
  background: #f1ecee;
  font: 7px/11px ${ui};
  white-space: nowrap;
`;
const Cell = styled.span<{ $w?: number; $dim?: boolean; $cut?: boolean }>`
  flex: ${(q) => (q.$w ? 'none' : '1')};
  width: ${(q) => (q.$w ? q.$w + 'px' : 'auto')};
  color: ${(q) => (q.$dim ? '#8c8790' : '#1c1c24')};
  overflow: ${(q) => (q.$cut ? 'hidden' : 'visible')};
`;

const menus = ['Файл', 'Правка', 'Вид', 'Настройки', 'Рисование', 'Объекты', 'Библиотека', 'Инструменты', 'Окно', 'Справка'];
const names = ["Окно 'Выбор пользователя'", "Окно 'Архив 1' активно", "Окно 'Архив 2' активно", "Окно 'Архив 3' активно", "Окно 'Изменение режима' активно", "Окно 'Настройки графика' активно", "Окно 'Реактор' активно", "Окно 'Котёл' активно", "Окно 'Выбор канала' активно", "Окно 'Настройки журнала' активно", "Окно 'Аварии' активно", 'Вкладка | Аварии', 'Вкладка | Оператор', 'Вкладка | История', 'Меню | Реактор', 'Меню | Котёл', 'Меню | Управление', 'Меню | Параметры', 'Меню | Архив', 'Меню | Журнал'];
const windows = ['3', '*4 : Общее окно', '5 : ПЛК не доступен', '6', '7 : Отказ в доступе', '8 : Недостаточно места', '9', '*10 : Котёл-газ', '11 : Настройки', '*12 : Уставки 1', '*13 : Уставки 2', '14 : Табло', '15 : Архив', '16 : Журнал', '17', '18', '19 : О проекте', '*20 : Выбор окна параметров', '*21 : Выбор окна архива', '22 : Выбор канала {Макрос : [Открыть (17)] [Цикл (1', '23 : Настройки графика', '24 : Выбор пользователя', '25 : Вкладки | Аварии', '26 : Вкладки | Оператор', '27 : Вкладки | История', '28', '29 : Выбор графиков {Макрос : [Открыть (20)]}', '30 : Котёл-газ (задний план)', '31 : Настройки (задний план)', '32 : Уставки 1 (задний план)', '33 : Уставки 2 (задний план)', '34 : Табло (задний план)', '35 : Архив (задний план)', '36 : Журнал (задний план)', '37', '38', '39', '40 : Пустое (заглушка)', '41 : Хранитель экрана', '42', '43 : Управление | Топливо', '44 : Управление | Воздух', '45 : Управление | Разряжение', '46 : Управление | Котёл', '47', '48', '49', '50 : Цифровая клавиатура'];

const Cross = ({ s = 7, c = '#222' }: { s?: number; c?: string }) => (
  <svg width={s} height={s} viewBox="0 0 8 8"><path d="M1 1l6 6M7 1L1 7" stroke={c} strokeWidth="1.500" /></svg>
);

const ButtonDialog = () => (
  <Dialog $x={367} $y={45} $w={354} $h={502} aria-label="Параметры объекта">
    <DialogTitle>
      <DialogName>Комбинированная кнопка Параметры объекта</DialogName>
      <CloseButton aria-label="Закрыть">
        <svg width="9" height="8" viewBox="0 0 9 8"><path d="M1 1h2l1.500 2L6 1h2L5.500 4 8 7H6L4.500 5 3 7H1l2.500-3z" fill="#fff" stroke="#444" strokeWidth=".800" /></svg>
      </CloseButton>
    </DialogTitle>
    <Client>
      <DlgTabs>
        <DlgTab $w={34} $on>Общие</DlgTab><DlgTab $w={53}>Безопасность</DlgTab><DlgTab $w={33}>Фигура</DlgTab>
        <DlgTab $w={34}>Шрифт</DlgTab><DlgTab $w={36}>Профиль</DlgTab>
      </DlgTabs>
      <Page>
        <Group $bottom={4}>
          <Legend>Индикатор</Legend>
          <Row $top={4}><RowLabel $w={69} htmlFor="mode">Режим :</RowLabel><Choice id="mode" text="Битовый индикатор" w={98} /></Row>
          <Row $top={5}><RowLabel $w={54} htmlFor="plc">Имя ПЛК:</RowLabel><Choice id="plc" text="Панель" w={184} /><PushButton $w={52}>Параметры...</PushButton></Row>
          <Row $top={2}><RowLabel $w={54} htmlFor="addr">адрес :</RowLabel><Choice id="addr" text="Меню | Архив (Меню | А" w={96} /><TextBox $w={63} aria-label="Бит" defaultValue="LW_Bit-402 03" /><Stub $w={23} /></Row>
          <Row $top={7} $pad={54}><TickLabel><Tick type="checkbox" />Инвертирование</TickLabel></Row>
        </Group>
        <Group>
          <Legend>Действие</Legend>
          <ActionArea>
            <SideButtons>
              <SideButton aria-label="Вверх"><svg width="9" height="7" viewBox="0 0 9 7"><path d="M4.500 0L9 7H0z" /></svg></SideButton>
              <SideButton aria-label="Вниз"><svg width="9" height="7" viewBox="0 0 9 7"><path d="M4.500 7L9 0H0z" fill="#777" /></svg></SideButton>
              <SideButton $gap aria-label="Копировать"><Icon n="clone" s={10} /></SideButton>
              <SideButton aria-label="Вставить"><Icon n="paste" s={10} /></SideButton>
              <SideButton aria-label="Удалить"><Cross s={10} c="#c81e3c" /></SideButton>
            </SideButtons>
            <ActionList>
              <Actions role="listbox">
                <Option role="option">Установить слово (Запи</Option>
                <Option role="option">Установить слово (Запи</Option>
                <Option role="option" $on>Установить бит (Перекл</Option>
              </Actions>
              <ArrowWrap $w={83}><AddButton $w={83}>Добав....</AddButton></ArrowWrap>
            </ActionList>
            <ActionForm>
              <Row $top={2}><RowLabel $w={90} htmlFor="style">Стиль :</RowLabel><Choice id="style" text="Переключить" w={92} /></Row>
              <WriteGroup>
                <Legend>Адрес записи</Legend>
                <Row $top={2}><Choice id="target" text="Панель" w={178} /></Row>
                <Row $top={3}><Choice id="target-addr" text="Меню | Архив (Меню | А" w={98} off /><TextBox $w={55} aria-label="Бит записи" defaultValue="LW_Bit-402 03" /></Row>
              </WriteGroup>
            </ActionForm>
          </ActionArea>
        </Group>
      </Page>
      <Footer><PushButton $w={49}>OK</PushButton><PushButton $w={49}>Отмена</PushButton><LastButton $w={49}>Справка</LastButton></Footer>
    </Client>
  </Dialog>
);

const FilterDialog = () => (
  <Dialog $blue $x={505} $y={260} $w={253} $h={267} aria-label="Фильтр">
    <FilterClient>
      <Row><RowLabel $w={41} htmlFor="filter">Фильтр :</RowLabel><TextBox $w={156} id="filter" /></Row>
      <Row $top={3} $pad={43}><TickLabel><Tick type="checkbox" />Использовать спецсимволы</TickLabel></Row>
      <Names>
        <NameList role="listbox">
          {names.map((n) => <NameItem key={n} role="option" $on={n === 'Меню | Архив'}>{n}</NameItem>)}
        </NameList>
        <Scroll><Tri $up /><Thumb $top={65} $h={11} /><Tri $end /></Scroll>
      </Names>
      <Hint>При использование групповых символов, звездочка (*)<br />представляет собой один или несколько символов, а знак вопроса<br />(?) представляет собой один символ.</Hint>
      <DialogButtons><PushButton $w={52} $look="default">OK</PushButton><PushButton $w={52} $look="hot">Отменить</PushButton></DialogButtons>
    </FilterClient>
  </Dialog>
);

export default function App() {
  return (
    <App_>
      <Global />
      <TitleBar>
        <AppMark>P</AppMark>
        <AppTitle>EasyBuilder Pro : 5901 - [10 - Котёл-газ ]</AppTitle>
        <SysButtons>
          <SysButton aria-label="Свернуть"><svg width="8" height="7"><path d="M1 5h6" stroke="#fff" strokeWidth="2" /></svg></SysButton>
          <SysButton aria-label="Развернуть"><svg width="8" height="8"><path d="M2.500 1.500h4v3h-4zM1 3.500h4v3H1z" fill="#4a8a70" stroke="#fff" /></svg></SysButton>
          <SysButton $wide aria-label="Закрыть"><Cross c="#fff" /></SysButton>
        </SysButtons>
      </TitleBar>
      <MenuBar>
        <Grip /><AppMark>P</AppMark>
        {menus.map((m) => <MenuItem key={m}>{m}</MenuItem>)}
        <MdiButtons>
          <PlainButton aria-label="Свернуть окно"><svg width="5" height="7"><path d="M0 6h4" stroke="#222" strokeWidth="1.500" /></svg></PlainButton>
          <PlainButton aria-label="Восстановить окно"><svg width="7" height="7"><path d="M2.500 1h3v2.500h-3zM.500 3.500h3V6h-3z" fill="none" stroke="#222" /></svg></PlainButton>
          <PlainButton aria-label="Закрыть окно"><Cross s={6} /></PlainButton>
        </MdiButtons>
      </MenuBar>
      <ToolRow $end={962}>
        <Grip />
        <ToolIcons w={46} names="file open save" />
        <ToolIcons sep w={78} names="cut copy paste undo redo" />
        <ToolIcons sep w={47} names="print help whats" />
        <ToolIcons sep w={16} names="find" />
        <ToolIcons sep w={77} names="brush grid snap box boxes" on={[1, 3, 4]} />
        <Grip />
        <ToolIcons w={62} names="back front fwd bwd" />
        <ToolIcons sep w={92} names="cw ch ct cp ml mr" />
        <ToolIcons sep w={62} names="sw sh s3 s4" />
        <ToolIcons sep w={92} names="al ac ar at am ab" />
        <ToolIcons sep w={31} names="dh dv" />
        <ToolIcons sep w={62} names="z1 z2 z3 z4" />
        <ToolIcons sep w={62} names="f1 f2 f3 f4" />
        <ToolIcons sep w={31} names="g1 g1" />
        <ToolIcons sep w={40} names="go stack" />
        <BarCombo label="Масштаб" text="100 %" w={98} />
      </ToolRow>
      <ToolRow $end={1095}>
        <Grip />
        <BarCombo label="Шрифт" text="Tahoma" w={97} />
        <ToolGroup $w={3} />
        <BarCombo label="Размер" text="10" w={98} />
        <ToolIcons w={93} names="grow shrink space alignL alignC alignR" on={[4]} />
        <ToolGroup $w={56} $sep>
          <ToolButton aria-label="Курсив"><i>I</i></ToolButton>
          <ToolButton aria-label="Цвет"><svg width="12" height="12"><path d="M1 10.500h10" stroke="#111" strokeWidth="2" /><text x="3" y="9" fontSize="8" fontWeight="700">A</text></svg></ToolButton>
          <PlainButton aria-label="Палитра"><Tri /></PlainButton>
          <ToolButton aria-label="Подчёркнутый"><u>U</u></ToolButton>
        </ToolGroup>
        <BarCombo label="Язык" text="язык 1" w={98} />
        <ToolGroup $w={63}>
          <ToolButton $on>L1</ToolButton><ToolButton $dim>L2</ToolButton><ToolButton $dim>L3</ToolButton><ToolButton $dim>L4</ToolButton>
        </ToolGroup>
        <Grip />
        <ToolGroup $w={93}>
          <ToolButton $on $bold>0</ToolButton><ToolButton $bold>1</ToolButton><ToolButton $bold>2</ToolButton><ToolButton $bold>3</ToolButton>
          <ToolButton aria-label="Назад"><svg width="4" height="7"><path d="M4 0v7L0 3.500z" fill="#141c84" /></svg></ToolButton>
          <ToolButton aria-label="Вперёд"><svg width="4" height="7"><path d="M0 0v7l4-3.500z" fill="#141c84" /></svg></ToolButton>
        </ToolGroup>
        <BarCombo label="Состояние" text="Состояние 0" w={99} />
        <Grip />
        <ToolIcons w={77} names="flash shape picture shelfG shelf" />
        <ToolIcons sep w={94} names="note tableB cube tag edit bars" />
        <Grip />
        <ToolIcons w={184} names="run textA screen cal clip win house sched hand gray1 gray2 gray3" />
      </ToolRow>

      <Main>
        <Palette $w={18}>
          <Grip $row />
          <PaletteIcons h={324} names="words words move flow bar3 gauge wheel scatter trend target list chartY wave docG docG2 red alarm panel spider touch docG docG2" />
          <Grip $row />
          <PaletteIcons h={192} names="tools mon monR disks disksR sd pen csv sheet camera phone chartG gmt" />
        </Palette>
        <Palette $w={18}>
          <Grip $row />
          <PaletteIcons h={30} names="arrow props" on={0} />
          <Grip $row />
          <PaletteIcons h={177} names="line poly bez arc circle pie rect roundp bracket bigA image corner" />
          <Grip $row />
          <PaletteIcons h={280} names="bulb light slide num sheets green multi split key term termB cnt tag2 clock ruler timer net look grayBag" />
        </Palette>
        <Work>
          <TabStrip>
            <TabArrow aria-label="Прокрутить влево"><svg width="5" height="6"><path d="M4 .500v5L1 3z" fill="none" stroke="#555" strokeWidth=".800" /></svg></TabArrow>
            <DocTab $w={75} $on>10 - Котёл-газ <Cross s={6} /></DocTab>
            <DocTab $w={68}>4 - Общее окно</DocTab>
            <DocTab $w={97}>21 - Выбор окна архива</DocTab>
            <DocTab $w={116}>20 - Выбор окна параметров</DocTab>
            <DocTab $w={59}>12 - Уставки 1</DocTab>
            <DocTab $w={60}>13 - Уставки 2</DocTab>
            <TabArrow $end aria-label="Прокрутить вправо"><svg width="5" height="6"><path d="M1 .500v5L4 3z" fill="none" stroke="#333" strokeWidth=".800" /></svg></TabArrow>
          </TabStrip>
          <CanvasFrame>
            <Canvas>
              <Screen>
                <ScreenHead>
                  <Logo>
                    <svg width="12" height="19" viewBox="0 0 12 19"><path d="M7 0Q0 7 1 10t4 5Q3 10 8 5 9 3 7 0z" fill="#1d7f90" /><path d="M11 4Q5 10 6 12t2 3-3 4q6-3 6-7t0-8z" fill="#3aa6b0" /></svg>
                    АГАВА
                  </Logo>
                  <ScreenTitle>Котёл</ScreenTitle>
                  <NavButton>КОТЁЛ</NavButton><NavButton>ПАРАМЕТРЫ</NavButton><NavButton>АРХИВ</NavButton><NavButton>ЖУРНАЛ</NavButton>
                </ScreenHead>
                <Scheme />
                <Lamp viewBox="0 0 8 6"><path d="M4 0l4 6H0z" fill="#f4ec30" /></Lamp>
                <Clock>Ср 23/12/2015 09:34</Clock>
                <Warning>Нет связи с контроллером!</Warning>
                <ControlButton>
                  <svg width="18" height="18" viewBox="0 0 18 18"><circle cx="9" cy="9" r="5.500" fill="none" stroke="#333" strokeWidth="3" /><circle cx="9" cy="9" r="7.500" fill="none" stroke="#333" strokeWidth="2" strokeDasharray="3 2.890" /><circle cx="9" cy="9" r="1.500" fill="#333" /></svg>
                  УПРАВЛЕНИЕ
                </ControlButton>
                {[403, 436, 470].flatMap((x) => [-1, 11, 25].filter((y) => !(x === 436 && y === 11)).map((y) => <Handle key={`${x}:${y}`} $x={x} $y={y} />))}
                <Flag width="11" height="8"><path d="M0 1h11M0 3h11M0 5h11M0 7h11" stroke="#d06a78" /><path d="M0 0h6v4H0z" fill="#5a6cb0" /><path d="M0 2h11M0 6h11" stroke="#e8c8d4" strokeWidth=".500" /></Flag>
              </Screen>
              <ButtonDialog />
              <FilterDialog />
              <Pointer width="9" height="14" viewBox="0 0 9 14"><path d="M.500.500v10L3 8.500l2 4.500 2-1-2-4.300h3.500z" fill="#fff" stroke="#222" strokeWidth=".800" /></Pointer>
            </Canvas>
          </CanvasFrame>
        </Work>
        <Side>
          <SideTitle><SideName>Окна</SideName><PlainButton aria-label="Меню"><Tri /></PlainButton><PlainButton aria-label="Закрыть панель"><Cross s={6} /></PlainButton></SideTitle>
          <SideBody>
            <SelectSlot>
              <ArrowWrap><ObjectSelect aria-label="Вид списка" defaultValue="Список объектов"><option>Список объектов</option></ObjectSelect></ArrowWrap>
            </SelectSlot>
            <Tree>
              <TreeList>
                {windows.map((w) => <TreeItem key={w} $box={w[0] === '*'}>{w}</TreeItem>)}
              </TreeList>
              <Scroll><Tri $up /><Thumb $top={4} $h={13} /><Tri $end /></Scroll>
            </Tree>
            <HScroll>
              <svg width="4" height="6"><path d="M3 1v4L1 3z" /></svg>
              <HThumb><svg width="7" height="4"><path d="M1.500 0v4M3.500 0v4M5.500 0v4" stroke="#555" /></svg></HThumb>
              <svg width="18" height="6"><path d="M15 1v4l2-2z" /></svg>
            </HScroll>
          </SideBody>
          <SideTabs><SideTab>Адрес</SideTab><SideTab $on>Окна</SideTab></SideTabs>
        </Side>
      </Main>

      <StatusBar>
        <Cell $w={335}>(609, 2) - (703, 38) [(28, 10)]</Cell>
        <Cell $w={321} $cut>CB_0 (Архив (кнопки) : LW403, Параметры (кнопки) : LW404, Меню | Архив : LW_Bit402 03, М</Cell>
        <Cell>MT8070iE/MT8100iE (800 x 480)</Cell>
        <Cell $w={56} $dim>Ширина: &nbsp; 95</Cell>
        <Cell $w={51} $dim>Высота: &nbsp; 37</Cell>
        <Cell $w={33}>X = 663</Cell>
        <Cell $w={98}>Y = 25</Cell>
        <Cell $w={16} $dim>CAP</Cell>
        <Cell $w={22}>NUM</Cell>
        <Cell $w={18} $dim>SCRL</Cell>
      </StatusBar>
    </App_>
  );
}
